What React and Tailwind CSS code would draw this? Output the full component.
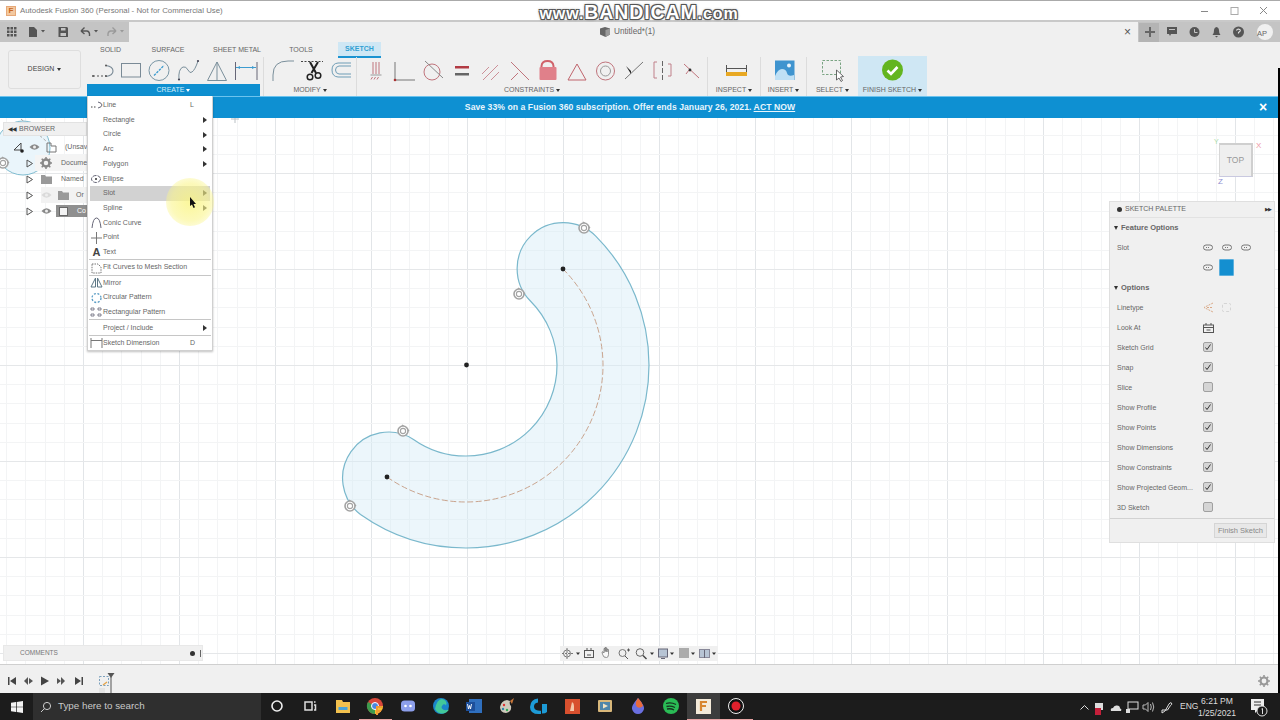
import React from "react";

// svg whose viewBox is in page coordinates, so shapes can be read straight off the screen
const Draw = ({ x, y, w, h, className = "", children }) => (
  <svg width={w} height={h} viewBox={`${x} ${y} ${w} ${h}`} fill="none" className={`block shrink-0 ${className}`}>
    {children}
  </svg>
);

const Caret = ({ x, y, c = "#555" }) => <path d={`M${x - 2} ${y - 1}h4l-2 2.5z`} fill={c} />;

const Ring = ({ x, y }) => (
  <g stroke="#a3a3a3" fill="#fff">
    <path d={`M${x - 1} ${y - 6}l7 6`} strokeWidth="1.6" />
    <circle cx={x} cy={y} r="5" strokeWidth="1.6" />
    <circle cx={x} cy={y} r="2.6" strokeWidth="1.100" />
  </g>
);

const Tab = ({ w, active, children }) => (
  <div
    className={`h-[16px] flex items-center justify-center text-[7px] shrink-0 ${
      active ? "bg-[#cfe7f4] border-b-2 border-[#1b93d1] text-[#2f9fd3] font-bold" : "text-[#666]"
    } ${w}`}
  >
    {children}
  </div>
);

const GroupLabel = ({ children }) => (
  <div className="h-[12px] flex items-center justify-center gap-[2px] text-[7px] text-[#666]">
    {children}
    <span className="w-0 h-0 border-x-[2px] border-x-transparent border-t-[3px] border-t-[#333]" />
  </div>
);

const TitleBar = () => (
  <div className="h-[22px] bg-white border-t border-[#aaa] border-b-2 border-b-[#c9c9c9] flex items-center shrink-0">
    <div className="w-[10px] h-[10px] ml-[6px] bg-[#f3c9a0] border border-[#e6a878] flex items-center justify-center text-[8px] leading-none text-[#c9651f] font-bold">
      F
    </div>
    <span className="ml-[4px] text-[7.850px] text-[#777]">Autodesk Fusion 360 (Personal - Not for Commercial Use)</span>
    <div className="ml-auto flex items-center">
      <Draw x={1190} y={2} w={88} h={16}>
        <path d="M1199 10.500h7" stroke="#888" />
        <rect x="1229" y="6.500" width="7" height="7" stroke="#aaa" />
        <path d="M1258 6l7 7m0-7l-7 7" stroke="#888" />
      </Draw>
    </div>
  </div>
);

const QuickBar = () => (
  <div className="h-[20px] bg-[#f0f0f0] flex items-center shrink-0">
    <div className="w-[129px] h-full bg-[#c4c4c4] shrink-0">
      <Draw x={0} y={22} w={129} h={20}>
        <g fill="#555">
          <rect x="7" y="27" width="2.500" height="2.500" /><rect x="10.500" y="27" width="2.500" height="2.500" /><rect x="14" y="27" width="2.500" height="2.500" />
          <rect x="7" y="30.500" width="2.500" height="2.500" /><rect x="10.500" y="30.500" width="2.500" height="2.500" /><rect x="14" y="30.500" width="2.500" height="2.500" />
          <rect x="7" y="34" width="2.500" height="2.500" /><rect x="10.500" y="34" width="2.500" height="2.500" /><rect x="14" y="34" width="2.500" height="2.500" />
          <path d="M29 27h5l3 3v7h-8z" />
          <path d="M58.500 27h8.500l1 1v9h-9.500z" />
        </g>
        <rect x="61" y="28" width="4.500" height="2.500" fill="#c4c4c4" />
        <rect x="60.500" y="33" width="5.500" height="3" fill="#c4c4c4" />
        <Caret x={43} y={31} />
        <path d="M81 31l3.500-3.500M81 31l3.500 3M81.500 31h5.500q3 .5 2.500 5" stroke="#555" strokeWidth="1.400" />
        <Caret x={96} y={31} />
        <path d="M116 31l-3.500-3.500M116 31l-3.500 3M115.500 31h-5q-3 .5-2.500 5" stroke="#9a9a9a" strokeWidth="1.400" />
        <Caret x={122} y={31} c="#999" />
      </Draw>
    </div>
    <div className="ml-[470px] flex items-center gap-[3px]">
      <Draw x={600} y={27} w={12} h={12}>
        <path d="M601 29.500l5-1.500 5 1.500v6l-4.500 2.500-5.500-2.500z" fill="#666" />
        <path d="M606.500 31l4.500-1.500v6l-4.500 2.500z" fill="#999" />
      </Draw>
      <span className="text-[8.200px] text-[#666]">Untitled*(1)</span>
    </div>
    <span className="ml-[469px] text-[12px] leading-none text-[#555]">×</span>
    <div className="ml-auto w-[142px] h-full bg-[#c4c4c4] shrink-0">
      <Draw x={1136} y={22} w={142} h={20}>
        <rect x="1137" y="23" width="20" height="19" fill="#b4b4b4" />
        <path d="M1148 27v10m-5-5h10" stroke="#666" strokeWidth="2" />
        <path d="M1165 27h10v7h-6l-1 2-1-2h-2z" fill="#555" />
        <path d="M1167 29.500h6" stroke="#c4c4c4" />
        <circle cx="1192.500" cy="32" r="5" fill="#555" />
        <path d="M1192.500 29v3.500h3" stroke="#c4c4c4" />
        <path d="M1210.500 35q1.500-1 1.500-4.500 0-3 2.500-3.500 2.500.5 2.500 3.500 0 3.500 1.500 4.500zM1213 36h3l-1.500 1.500z" fill="#555" />
        <circle cx="1236.500" cy="32" r="5.500" fill="#555" />
        <path d="M1234.500 30.500q.5-1.500 2-1.500 2 .3 1.800 1.700-.5 1-1.800 1.800v1" stroke="#e5e5e5" strokeWidth="1.100" />
        <circle cx="1263" cy="32" r="8" fill="#f0f0f0" />
      </Draw>
    </div>
  </div>
);

const CreateIcons = () => (
  <Draw x={87} y={57} w={173} h={27}>
    <path d="M93 76h13" stroke="#555" strokeDasharray="2 2" />
    <path d="M106 65.500q7 1 7 5.500t-7 5.500" stroke="#7a8a96" strokeWidth="1.100" />
    <circle cx="93" cy="76" r="1" fill="#555" /><circle cx="106" cy="76" r="1" fill="#555" /><circle cx="106" cy="65.500" r="1" fill="#555" />
    <rect x="121.500" y="63.500" width="19" height="13.500" stroke="#7a8a96" />
    <circle cx="159" cy="70.500" r="10" stroke="#7a96a5" />
    <path d="M154 75.500l10-10" stroke="#3d9cd0" strokeWidth="1.300" strokeDasharray="2.500 1" />
    <path d="M179 80q-1-11 4-13 3-1 5 3t4 2q3-2 6-11" stroke="#7a8f9b" />
    <circle cx="179" cy="79.500" r="1.100" fill="#445" /><circle cx="198" cy="61" r="1.100" fill="#445" />
    <path d="M217 62l-9.500 18.500h19zM217 62v18.500" stroke="#7a8f9b" />
    <path d="M235.500 62v18M257 62v18" stroke="#667" />
    <path d="M236 67.500h20" stroke="#3d9cd0" />
    <path d="M237 67.500l3-1.500v3zM255 67.500l-3-1.500v3z" fill="#3d9cd0" />
  </Draw>
);

const ModifyIcons = () => (
  <Draw x={263} y={57} w={93} h={27}>
    <path d="M272 81v-6q0-14 15-14h6" stroke="#7a8f9b" />
    <path d="M300 61.500h22" stroke="#444" strokeDasharray="2 1.500" />
    <path d="M309 62l6 11M317 62l-6.500 11" stroke="#222" strokeWidth="2" />
    <circle cx="309" cy="77" r="2.800" stroke="#222" strokeWidth="1.500" />
    <circle cx="317" cy="75.500" r="2.800" stroke="#222" strokeWidth="1.500" />
    <path d="M350 63h-13q-6 .5-6 7t6 7h13" stroke="#6f9db6" />
    <path d="M350 66h-12q-3.500.5-3.500 4t3.500 4h12" stroke="#6f9db6" />
  </Draw>
);

const ConstraintIcons = () => (
  <Draw x={356} y={57} w={351} h={27}>
    <g stroke="#c0747c">
      <path d="M372 62v12M375 62v12M378 62v12" />
      <path d="M369.500 75h11" stroke="#999" />
      <path d="M370 79.500l1.500-2.500M373 79.500l1.500-2.500M376 79.500l1.500-2.500" />
    </g>
    <path d="M394 62v18h20" stroke="#777" />
    <circle cx="394" cy="80" r="1.300" fill="#a33" />
    <circle cx="431" cy="72" r="8" stroke="#c0747c" />
    <path d="M424 61l18 17" stroke="#888" />
    <rect x="454" y="66" width="14" height="2.500" fill="#b23b44" />
    <rect x="454" y="73" width="14" height="2.500" fill="#666" />
    <path d="M482 80l15-15M490 80l8-8M481 74l7-7" stroke="#cc9098" />
    <path d="M510 62l18 18M510 80l7-7" stroke="#c0747c" />
    <path d="M540.500 67v-1q.5-5 6-5t6 5v1" stroke="#d0626a" strokeWidth="2" />
    <rect x="538.500" y="67" width="17" height="13" rx="1" fill="#e0808a" />
    <path d="M576 64l-9 16h18z" stroke="#c0646c" />
    <circle cx="604.500" cy="71" r="9" stroke="#c0747c" />
    <circle cx="604.500" cy="71" r="5" stroke="#999" />
    <path d="M624 79l18-17" stroke="#777" />
    <path d="M625 66l5 5 0 3z" fill="#222" />
    <path d="M656 62h-3v16h3M667 64h3v12h-3" stroke="#c0808a" />
    <path d="M661.500 61v19" stroke="#666" strokeDasharray="5 2" />
    <path d="M683 64l15 14M688 70l-3 4" stroke="#c0747c" />
    <circle cx="689" cy="70" r="1.400" fill="#333" />
  </Draw>
);

const Group = ({ w, sep, label, children }) => (
  <div className={`flex flex-col shrink-0 ${w} ${sep ? "border-l border-[#dcdcdc]" : ""}`}>
    <div className="h-[27px]">{children}</div>
    {label && <GroupLabel>{label}</GroupLabel>}
  </div>
);

const Toolbar = () => (
  <div className="h-[54px] bg-[#f0f0f0] flex shrink-0">
    <div className="ml-[8px] mt-[8px] w-[73px] h-[39px] rounded-[3px] border border-[#dedede] flex items-center justify-center gap-[3px] text-[7px] text-[#444] shrink-0">
      DESIGN
      <span className="w-0 h-0 border-x-[2px] border-x-transparent border-t-[3px] border-t-[#333]" />
    </div>
    <div className="ml-[6px] flex flex-col">
      <div className="flex">
        <Tab w="w-[47px]">SOLID</Tab>
        <Tab w="w-[68px]">SURFACE</Tab>
        <Tab w="w-[70px]">SHEET METAL</Tab>
        <Tab w="w-[58px] mr-[8px]">TOOLS</Tab>
        <Tab w="w-[43px]" active>SKETCH</Tab>
      </div>
      <div className="flex -mt-px">
        <div className="w-[173px] shrink-0 flex flex-col">
          <CreateIcons />
          <div className="h-[12px] bg-[#0e8fd0] text-[#d5eefa] text-[7px] flex items-center justify-center gap-[2px]">
            CREATE
            <span className="w-0 h-0 border-x-[2px] border-x-transparent border-t-[3px] border-t-white" />
          </div>
        </div>
        <div className="w-[3px] shrink-0" />
        <Group w="w-[93px]" sep label="MODIFY"><ModifyIcons /></Group>
        <Group w="w-[351px]" sep label="CONSTRAINTS"><ConstraintIcons /></Group>
        <Group w="w-[53px]" sep label="INSPECT">
          <Draw x={707} y={57} w={53} h={27}>
            <path d="M725.500 65v10M745.500 65v10M726 68.500h19" stroke="#555" />
            <rect x="725" y="72" width="21" height="4" fill="#e8a823" />
          </Draw>
        </Group>
        <Group w="w-[46px]" sep label="INSERT">
          <Draw x={760} y={57} w={46} h={27}>
            <rect x="774" y="60.500" width="19.500" height="19.500" fill="#3f94cf" />
            <circle cx="788" cy="65.500" r="2" fill="#eaf4fb" />
            <path d="M774 76q3-7 7-7t5 4 7 2v5h-19z" fill="#bfe0f5" />
          </Draw>
        </Group>
        <Group w="w-[52px]" sep label="SELECT">
          <Draw x={806} y={57} w={52} h={27}>
            <rect x="821.500" y="60.500" width="18" height="14" stroke="#7aa483" strokeDasharray="2.500 1.500" />
            <path d="M835.500 70v10l2.500-2 2 3.500 1.500-1-2-3.500 3-.5z" fill="#fff" stroke="#444" strokeWidth=".8" />
          </Draw>
        </Group>
        <div className="w-[69px] -mt-px bg-[#cfe7f4] flex flex-col shrink-0">
          <Draw x={858} y={56} w={69} h={28}>
            <circle cx="892.500" cy="70" r="10.500" fill="#63b51f" />
            <path d="M887.500 70.500l3.500 3.500 6.500-7" stroke="#fff" strokeWidth="2.600" />
          </Draw>
          <GroupLabel>FINISH SKETCH</GroupLabel>
        </div>
      </div>
    </div>
  </div>
);

const Banner = () => (
  <div className="h-[22px] bg-[#0e90d2] border-t border-[#6cc3ee] flex items-center justify-center pr-[20px] relative shrink-0 text-[8.650px] font-bold text-[#e8f5fc] tracking-[0.05px]">
    <span>
      Save 33% on a Fusion 360 subscription. Offer ends January 26, 2021. <span className="underline">ACT NOW</span>
    </span>
    <span className="absolute left-[1259px] top-[2px] text-[14px] leading-[16px] font-bold text-white">×</span>
  </div>
);

const Canvas = () => {
  const xs = [];
  for (let i = -24; i < 44; i++) xs.push(467 + i * 19.2);
  const ys = [];
  for (let i = -13; i < 17; i++) ys.push(365 + i * 19.2);
  return (
    <div className="flex-1 bg-white overflow-hidden min-h-0">
      <Draw x={0} y={118} w={1280} h={546}>
        {xs.map((v, i) => (
          <path key={`x${i}`} d={`M${Math.round(v) + 0.5} 118V664`} stroke={(i - 24) % 5 === 0 ? "#e2e5e8" : "#f3f4f5"} />
        ))}
        {ys.map((v, i) => (
          <path key={`y${i}`} d={`M0 ${Math.round(v) + 0.5}H1280`} stroke={(i - 13) % 5 === 0 ? "#e5e7e9" : "#f3f4f5"} />
        ))}
        <path d="M235 115v8M231 119h8" stroke="#b9c0c4" />
        {/* the earlier circle behind the browser panel */}
        <circle cx="23" cy="148" r="27" fill="#eaf5fb" stroke="#7fbcd0" />
        <path d="M21 119l25 22" stroke="#aaa" strokeDasharray="3 2" />
        <Ring x={3} y={163} />
        {/* slot: arcs split at the axes so they stay on the 466,365 centre */}
        <path
          d="M596 236.300A183 183 0 0 1 649 365A183 183 0 0 1 466 548A183 183 0 0 1 360.500 514.500A46 46 0 0 1 413.500 439.400A91 91 0 0 0 466 456A91 91 0 0 0 557 365A91 91 0 0 0 530.400 301A46 46 0 0 1 596 236.300Z"
          fill="#d5ebf7"
          fillOpacity="0.45"
          stroke="#7ab8cc"
          strokeWidth="1.200"
        />
        <path d="M563 269A137 137 0 0 1 603 365A137 137 0 0 1 466 502A137 137 0 0 1 387 477" stroke="#c9a48e" strokeDasharray="6 2.500" />
        <circle cx="563" cy="269" r="2.400" fill="#222" />
        <circle cx="387" cy="477" r="2.400" fill="#222" />
        <circle cx="466.500" cy="365" r="2.400" fill="#222" />
        <Ring x={584} y={228} />
        <Ring x={519} y={294} />
        <Ring x={403} y={431} />
        <Ring x={350} y={506} />
      </Draw>
    </div>
  );
};

const MenuIcon = ({ children }) => (
  <svg width="13" height="14" viewBox="0 0 13 14" fill="none" className="shrink-0">
    {children}
  </svg>
);

const menuTop = [
  { label: "Line", key: "L", icon: <><path d="M1 9h6" stroke="#444" strokeDasharray="1.500 1.500" /><path d="M8 4q4 1 4 3t-4 3" stroke="#667" /></> },
  { label: "Rectangle", arrow: true },
  { label: "Circle", arrow: true },
  { label: "Arc", arrow: true },
  { label: "Polygon", arrow: true },
  { label: "Ellipse", icon: <><ellipse cx="6" cy="7" rx="4.500" ry="3.500" stroke="#667" strokeDasharray="4 1" /><circle cx="6" cy="7" r="1" fill="#333" /></> },
  { label: "Slot", arrow: true, active: true },
  { label: "Spline", arrow: true },
  { label: "Conic Curve", icon: <path d="M2 12q1-10 4.500-10T11 12" stroke="#667" /> },
  { label: "Point", icon: <path d="M6.500 1v12M1 7h11" stroke="#777" /> },
  { label: "Text", big: true },
];

const Row = ({ label, sub, arrow, active, icon, big }) => (
  <div className={`h-[14.700px] flex items-center relative text-[7px] text-[#666] ${active ? "bg-[#d2d2d2]" : ""}`}>
    <div className="w-[13px] flex justify-center shrink-0">
      {big ? <span className="text-[11px] font-bold leading-none text-[#444]">A</span> : icon && <MenuIcon>{icon}</MenuIcon>}
    </div>
    <span>{label}</span>
    {sub && <span className="absolute left-[100px]">{sub}</span>}
    {arrow && <span className="absolute left-[113px] w-0 h-0 border-y-[3px] border-y-transparent border-l-[4px] border-l-[#333]" />}
  </div>
);

const Sep = () => <div className="h-px -mx-px -mt-[0.3px] bg-[#c6c6c6]" />;

const CreateMenu = () => (
  <div className="absolute left-[87px] top-[96px] w-[126px] h-[255px] bg-white border border-[#d0d0d0] border-t-0 shadow-[0_1px_2px_rgba(0,0,0,0.25)] pt-[2px] px-[2px]">
    {menuTop.map((m) => (
      <Row key={m.label} label={m.label} sub={m.key} arrow={m.arrow} active={m.active} icon={m.icon} big={m.big} />
    ))}
    <Sep />
    <Row label="Fit Curves to Mesh Section" icon={<path d="M2 3h6l3 3v6H2z" stroke="#777" strokeDasharray="1.500 1" />} />
    <Sep />
    <Row label="Mirror" icon={<path d="M5.500 2L1 11h4.500zM7.500 2L12 11H7.500z" stroke="#5d7785" />} />
    <Row label="Circular Pattern" icon={<circle cx="6.500" cy="7" r="4.500" stroke="#5a9cc4" strokeDasharray="2 1.600" strokeWidth="1.300" />} />
    <Row label="Rectangular Pattern" icon={<path d="M1 3h3v2H1zM8 3h3v2H8zM1 9h3v2H1zM8 9h3v2H8z" stroke="#667" strokeWidth=".8" />} />
    <Sep />
    <Row label="Project / Include" arrow />
    <Sep />
    <Row label="Sketch Dimension" sub="D" icon={<path d="M1 2v10M12 2v10M1 4.500h11" stroke="#777" />} />
  </div>
);

const TreeArrow = () => (
  <svg width="8" height="9" viewBox="0 0 8 9" fill="none" className="shrink-0">
    <path d="M1 1l5.500 3.500L1 8z" stroke="#555" />
  </svg>
);

const Eye = ({ c = "#8a8a8a" }) => (
  <svg width="11" height="8" viewBox="0 0 11 8" fill="none" className="shrink-0 block">
    <path d="M.5 4q5-5.500 10 0-5 5.500-10 0z" fill={c} />
    <circle cx="5.500" cy="4" r="1.500" fill="#eee" />
  </svg>
);

const Folder = () => (
  <svg width="11" height="9" viewBox="0 0 11 9" className="shrink-0 block">
    <path d="M0 0h4l1 1.500h6V9H0z" fill="#999" />
  </svg>
);

const Browser = () => (
  <div className="absolute left-[3px] top-[122px] w-[84px] flex flex-col text-[7px] text-[#666]">
    <div className="h-[14px] bg-[#f0f0f0] border border-[#e2e2e2] flex items-center pl-[4px] gap-[3px]">
      <span className="text-[6px] leading-none text-[#333] tracking-[-1px]">◀◀</span>
      <span>BROWSER</span>
    </div>
    <div className="h-[16px] mt-[3px] flex items-center pl-[10px]">
      <svg width="11" height="12" viewBox="0 0 11 12" fill="none" className="shrink-0">
        <path d="M1 9l7-7v7z" stroke="#444" />
        <circle cx="9" cy="10" r="1.800" fill="#222" />
      </svg>
      <span className="ml-[5px]"><Eye /></span>
      <svg width="11" height="11" viewBox="0 0 11 11" fill="none" className="ml-[6px] shrink-0">
        <path d="M1 1h4v3h5v6H1z" stroke="#777" />
      </svg>
      <span className="ml-[8px]">(Unsav</span>
    </div>
    <div className="h-[16px] flex items-center pl-[23px] bg-[linear-gradient(90deg,transparent_32px,#f4f4f4_32px)]">
      <TreeArrow />
      <svg width="12" height="12" viewBox="0 0 12 12" className="ml-[6px] shrink-0">
        <circle cx="6" cy="6" r="3.500" fill="none" stroke="#888" strokeWidth="2.500" />
        <path d="M6 0v2M6 10v2M0 6h2M10 6h2M1.700 1.700l1.400 1.400M8.900 8.900l1.400 1.400M1.700 10.300l1.400-1.400M8.900 3.100l1.400-1.400" stroke="#888" strokeWidth="1.500" />
      </svg>
      <span className="ml-[9px]">Docume</span>
    </div>
    <div className="h-[16px] flex items-center pl-[23px]">
      <TreeArrow />
      <span className="ml-[7px]"><Folder /></span>
      <span className="ml-[9px]">Named</span>
    </div>
    <div className="h-[16px] flex items-center pl-[23px] bg-[linear-gradient(90deg,transparent_38px,#f2f2f2_38px)]">
      <TreeArrow />
      <span className="ml-[7px]"><Eye c="#dadada" /></span>
      <span className="ml-[6px]"><Folder /></span>
      <span className="ml-[7px]">Or</span>
    </div>
    <div className="h-[16px] flex items-center pl-[23px]">
      <TreeArrow />
      <span className="ml-[7px]"><Eye /></span>
      <span className="ml-[4px] h-[12px] flex-1 bg-[#8f8f8f] flex items-center pl-[3px] gap-[9px] text-white">
        <span className="w-[9px] h-[9px] bg-[#f3f3f3] border border-[#666]" />
        Co
      </span>
    </div>
  </div>
);

const Check = ({ on }) => (
  <div className="w-[10px] h-[10px] rounded-[2px] bg-[#d5d5d5] border border-[#a0a0a0] flex items-center justify-center">
    {on && (
      <svg width="8" height="8" viewBox="0 0 8 8" fill="none">
        <path d="M1.500 4.500l1.500 2 3.500-5" stroke="#333" />
      </svg>
    )}
  </div>
);

const Pal = ({ label, children }) => (
  <div className="h-[20px] flex items-center relative pl-[7px] text-[7px] text-[#666]">
    {label}
    <div className="absolute left-[93px] -top-px h-full flex items-center">{children}</div>
  </div>
);

const PalHead = ({ children }) => (
  <div className="h-[20px] flex items-center pl-[4px] gap-[3px] text-[7.500px] font-bold text-[#666]">
    <span className="w-0 h-0 border-x-[2.500px] border-x-transparent border-t-[4px] border-t-[#333]" />
    {children}
  </div>
);

const SlotGlyph = () => (
  <svg width="10" height="7" viewBox="0 0 10 7" fill="none" className="shrink-0">
    <rect x=".5" y="1" width="9" height="5" rx="2.500" stroke="#777" />
    <path d="M3 3.500h4" stroke="#777" strokeDasharray="1 1" />
  </svg>
);

const checks = [
  ["Sketch Grid", true], ["Snap", true], ["Slice", false], ["Show Profile", true], ["Show Points", true],
  ["Show Dimensions", true], ["Show Constraints", true], ["Show Projected Geom...", true], ["3D Sketch", false],
];

const Palette = () => (
  <div className="absolute left-[1109px] top-[201px] w-[166px] h-[342px] bg-[#f0f0f0] border border-[#dfdfdf] flex flex-col">
    <div className="h-[16px] shrink-0 border-b border-[#e2e2e2] flex items-center pl-[7px] text-[7px] text-[#666] relative">
      <span className="w-[5px] h-[5px] rounded-full bg-[#333] mr-[3px]" />
      SKETCH PALETTE
      <span className="absolute left-[155px] text-[5px] leading-none text-[#333] tracking-[-1px]">▶▶</span>
    </div>
    <PalHead>Feature Options</PalHead>
    <Pal label="Slot">
      <div className="flex w-[50px] gap-[9px]"><SlotGlyph /><SlotGlyph /><SlotGlyph /></div>
    </Pal>
    <Pal>
      <div className="flex items-center gap-[6px]">
        <SlotGlyph />
        <div className="w-[15px] h-[17px] bg-[#148fd0] rounded-[1px] border border-[#5cb0dd]" />
      </div>
    </Pal>
    <PalHead>Options</PalHead>
    <Pal label="Linetype">
      <div className="flex items-center gap-[8px]">
        <svg width="11" height="11" viewBox="0 0 11 11" fill="none">
          <path d="M10 1L1 5.500l9 4.500M4 5.500h6" stroke="#d9a987" strokeDasharray="2 1" />
        </svg>
        <div className="w-[9px] h-[9px] rounded-[2px] border border-[#d5d5d5] border-dashed" />
      </div>
    </Pal>
    <Pal label="Look At">
      <svg width="11" height="11" viewBox="0 0 11 11" fill="none">
        <rect x=".5" y="3" width="10" height="7.500" stroke="#555" />
        <path d="M.5 5.500h10M3 1v2M8 1v2M3.500 8h4" stroke="#555" />
      </svg>
    </Pal>
    {checks.map(([label, on]) => (
      <Pal key={label} label={label}><Check on={on} /></Pal>
    ))}
    <div className="border-t border-[#d2d2d2] flex-1 flex items-start justify-end pt-[4px] pr-[7px]">
      <div className="w-[53px] h-[15px] bg-[#e8e8e8] border border-[#d5d5d5] flex items-center justify-center text-[7.500px] text-[#888]">
        Finish Sketch
      </div>
    </div>
  </div>
);

const Comments = () => (
  <div className="absolute left-[3px] top-[645px] w-[200px] h-[16px] bg-[#f0f0f0] border border-[#e8e8e8] flex items-center pl-[16px] text-[6.500px] text-[#777]">
    COMMENTS
    <span className="absolute left-[186px] w-[5px] h-[5px] rounded-full bg-[#333]" />
    <span className="absolute left-[196px] w-px h-[7px] bg-[#666]" />
  </div>
);

const NavBar = () => (
  <div className="absolute left-[560px] top-[646px] w-[158px] h-[15px] bg-[#f0f0f0]">
    <Draw x={560} y={646} w={158} h={15}>
      <circle cx="567" cy="653.500" r="3.500" stroke="#777" />
      <path d="M567 648v11M562 653.500h11" stroke="#777" strokeDasharray="2 1" />
      <Caret x={578} y={653.500} c="#333" />
      <rect x="584.500" y="650.500" width="9" height="7" stroke="#555" />
      <path d="M587 650v-2M591 650v-2M587 655h4" stroke="#555" />
      <path d="M604 657q-2-3-2-5 1-1 2 1v-4.500h1v3-4h1v4-3.500h1v4-2.500h1.500v5q0 3-2 3z" stroke="#777" fill="#f8f8f8" strokeWidth=".8" />
      <circle cx="622.500" cy="653" r="3.500" stroke="#777" />
      <path d="M625 656l3 3M627 650h3m-1.500-1.500v3" stroke="#555" />
      <circle cx="640" cy="652.500" r="3.800" stroke="#666" />
      <path d="M643 655.500l3.500 3.500" stroke="#444" strokeWidth="1.400" />
      <Caret x={652} y={653.500} c="#333" />
      <rect x="658.500" y="649" width="9" height="8" fill="#b7c4d4" stroke="#667" />
      <path d="M661 658.500h4" stroke="#667" />
      <Caret x={672} y={653.500} c="#333" />
      <path d="M679 649h10M679 651h10M679 653h10M679 655h10M679 657h10" stroke="#666" />
      <Caret x={693} y={653.500} c="#333" />
      <rect x="699.500" y="649.500" width="10" height="8" fill="#b7c4d4" stroke="#889" />
      <path d="M704.500 650v8" stroke="#667" />
      <Caret x={714} y={653.500} c="#333" />
    </Draw>
  </div>
);

const Timeline = () => (
  <div className="h-[29px] bg-[#f0f0f0] border-t border-[#cfcfcf] shrink-0">
    <Draw x={0} y={665} w={1278} h={28}>
      <g fill="#444">
        <path d="M8 677h1.500v8H8zM16 677v8l-6-4z" />
        <path d="M24 681l4-4v8zM29 678l4 3-4 3z" fill="#555" />
        <path d="M41 676.500l8 4.500-8 4.500z" />
        <path d="M57 678l4 3-4 3zM61 677l4 4-4 4z" fill="#555" />
        <path d="M75 677v8l6-4zM81.500 677H83v8h-1.500z" />
      </g>
      <rect x="99.500" y="676.500" width="9" height="9" stroke="#7ba0bd" strokeDasharray="2 1.500" />
      <path d="M103 685l4-3" stroke="#e5a44a" strokeWidth="1.400" />
      <rect x="99" y="688" width="6" height="5" fill="#e4e4e4" />
      <path d="M107.500 673h7l-3.500 5z" fill="#555" />
      <path d="M111 677v16" stroke="#555" />
      <circle cx="1264" cy="681" r="3.500" stroke="#999" strokeWidth="2.200" />
      <path d="M1264 675v2M1264 685v2M1258 681h2M1268 681h2M1259.800 676.800l1.400 1.400M1266.800 683.800l1.400 1.400M1259.800 685.200l1.400-1.400M1266.800 678.200l1.400-1.400" stroke="#999" strokeWidth="1.600" />
    </Draw>
  </div>
);

const taskIcons = [
  { id: "cortana", g: <circle cx="10" cy="10" r="5" stroke="#eee" strokeWidth="1.600" /> },
  { id: "view", g: <path d="M5 6h7v8H5zM14 6h1.500M14 9h1.500v5H14" stroke="#ddd" strokeWidth="1.500" /> },
  { id: "files", g: <><path d="M3 4h6l1 2h7v11H3z" fill="#f2c14e" /><rect x="5.500" y="11" width="9" height="3" fill="#4aa3d8" /></> },
  { id: "chrome", bar: true, g: <><circle cx="10" cy="10" r="8" fill="#d8483b" /><path d="M10 10L3 6A8 8 0 0 0 10 18z" fill="#3d9b4e" /><path d="M10 10v8a8 8 0 0 0 8-8z" fill="#f2c230" /><circle cx="10" cy="10" r="3.500" fill="#4a88e0" stroke="#fff" /><path d="M11 10h6v2h-4v2h3v2h-3v3h-2z" fill="#f29b33" /></> },
  { id: "discord", g: <><rect x="3" y="4.500" width="14" height="11" rx="3.500" fill="#8c9eea" /><circle cx="7.500" cy="10" r="1.300" fill="#fff" /><circle cx="12.500" cy="10" r="1.300" fill="#fff" /></> },
  { id: "edge", g: <><circle cx="10" cy="10" r="8" fill="#1b86c9" /><path d="M4 13q3 5 8 4.500 4-.5 6-4-5 2-7-1-1-2 1-4 2-1 3 1 2-5-4-6.500-5 0-7 10z" fill="#42c99a" /></> },
  { id: "word", g: <><rect x="5" y="3" width="13" height="14" fill="#2f6fbe" /><rect x="2" y="6" width="9" height="9" fill="#1d4f9b" /><path d="M3.500 8l1 5 1-3.500 1 3.500 1-5" stroke="#fff" strokeWidth=".9" fill="none" /></> },
  { id: "paint", g: <><path d="M3 11q1-6 7-7l3 1q-1 3 1 5 1 6-5 7-6-.5-6-6z" fill="#cfcabc" /><path d="M13 5l4-3-2 6z" fill="#c7763a" /><circle cx="7" cy="9" r="1.200" fill="#d33" /><circle cx="6" cy="13" r="1.200" fill="#38a" /><circle cx="10" cy="14" r="1.200" fill="#3a5" /></> },
  { id: "logi", g: <path d="M9 2.500v4q-4 .5-4 4t4 4 3-.5v4q-11 1-11-7 .5-8 8-8.500zM13 8h5v8q-1.500 1.500-5 1.500z" fill="#1d9bd7" /> },
  { id: "office", g: <><rect x="3" y="3" width="15" height="15" fill="#d8502e" /><path d="M8 15l2-9q2 1 2 4v5z" fill="#f4c7a8" /></> },
  { id: "video", g: <><rect x="3" y="4" width="14" height="12" rx="1" fill="#d8b77a" /><rect x="5" y="6" width="10" height="8" fill="#4e86aa" /><path d="M8 7.500l5 2.500-5 2.500z" fill="#f2e3c2" /></> },
  { id: "drop", g: <><path d="M10 2q7 8 6 11-1.500 5-6 5t-6-5q-1-3 6-11z" fill="#6a6fe0" /><path d="M10 2q4 4 5 8-3 3-6 1-3-3 1-9z" fill="#e96a3a" /></> },
  { id: "spotify", g: <><circle cx="10" cy="10" r="8" fill="#2abb55" /><path d="M5 7.500q5-1.500 10 1M5.500 10.500q4.500-1 8.500 1M6 13q4-.8 7 1" stroke="#15331f" strokeWidth="1.300" fill="none" /></> },
  { id: "fusion", active: true, bar: true, g: <><rect x="3" y="3" width="15" height="15" fill="#f4ead9" /><path d="M8 15V6h6M8 10h5" stroke="#d8862f" strokeWidth="2.200" fill="none" /></> },
  { id: "bandicam", bar: true, g: <><circle cx="10" cy="10" r="7.500" fill="#111" stroke="#eee" /><circle cx="10" cy="10" r="4.500" fill="#e0202c" /></> },
];

const Taskbar = () => (
  <div className="h-[27px] bg-[#1c1c1c] flex items-stretch shrink-0">
    <div className="w-[33px] flex items-center justify-center shrink-0">
      <svg width="12" height="12" viewBox="0 0 12 12" fill="#f2f2f2">
        <path d="M0 1.700L5 1v4.700H0zM5.700.9L12 0v5.700H5.700zM0 6.300h5V11l-5-.7zM5.700 6.300H12V12l-6.300-.9z" />
      </svg>
    </div>
    <div className="w-[227.600px] bg-[#2f2f2f] flex items-center pl-[7px] shrink-0">
      <svg width="12" height="12" viewBox="0 0 12 12" fill="none">
        <circle cx="7" cy="5" r="3.600" stroke="#ccc" />
        <path d="M4.500 7.500L1 11" stroke="#ccc" />
      </svg>
      <span className="ml-[6px] text-[9.800px] text-[#c9c9c9]">Type here to search</span>
    </div>
    {taskIcons.map((t) => (
      <div
        key={t.id}
        className={`w-[32.800px] flex items-center justify-center shrink-0 border-b ${t.bar ? "border-[#e7a3a3]" : "border-transparent"} ${t.active ? "bg-[#3d3d3d]" : ""}`}
      >
        <svg width="20" height="20" viewBox="0 0 20 20" fill="none">{t.g}</svg>
      </div>
    ))}
    <div className="ml-auto flex items-center text-[#ddd] shrink-0">
      <Draw x={1076} y={695} w={104} h={24}>
        <path d="M1080.500 709.500l4-4 4 4" stroke="#ddd" />
        <rect x="1095" y="703" width="8" height="7" fill="#ddd" />
        <rect x="1095" y="708" width="6" height="7" fill="#c41f3a" />
        <path d="M1111 711q-1-3 2-3 1-3 4-2.500 3 0 3 3 2 0 1 2.500z" fill="#ddd" />
        <rect x="1128" y="702" width="10" height="7" stroke="#ddd" />
        <path d="M1126 709h4v4h-4z" fill="#ddd" />
        <path d="M1143 705h2.500l2.500-2.500v9l-2.500-2.500H1143zM1150.500 704q1.500 3 0 6M1152.500 702.500q2.500 4.500 0 9" stroke="#bbb" />
        <path d="M1162 713l3-2 4-7q1-2 2.500-1 1 1.500-1 2.500l-3 4.500h-5.500z" stroke="#ddd" />
      </Draw>
      <span className="w-[17px] text-[8.500px] text-center">ENG</span>
      <div className="w-[40px] flex flex-col items-center text-[8.600px] leading-[12px]">
        <span>6:21 PM</span>
        <span>1/25/2021</span>
      </div>
      <svg width="20" height="22" viewBox="0 0 20 22" fill="none" className="ml-[12px] mr-[11px]">
        <path d="M2 3h13v11H9l-3 3v-3H2z" fill="#eee" />
        <path d="M5 6h7M5 9h7" stroke="#333" />
        <circle cx="13" cy="15" r="5" fill="#1c1c1c" stroke="#ddd" />
        <path d="M12.500 13l1-.5V18" stroke="#ddd" />
      </svg>
    </div>
  </div>
);

const ViewCube = () => (
  <div className="absolute left-[1213px] top-[137px] w-[50px] h-[52px]">
    <div className="absolute left-[6px] top-[6px] w-[34px] h-[34px] bg-[#efefef] border-t-2 border-r-2 border-[#cfcfcf] border-l border-b border-l-[#d7d7d7] border-b-[#c9c9e0] flex items-center justify-center text-[8.500px] text-[#999]">
      TOP
    </div>
    <span className="absolute left-[43px] top-[3px] text-[8px] text-[#ee9aa5]">X</span>
    <span className="absolute left-[5px] top-[39px] text-[8px] text-[#8f8fd0]">Z</span>
    <span className="absolute left-[1px] top-[0px] text-[7px] text-[#a8dba8]">Y</span>
  </div>
);

export default function App() {
  return (
    <div className="relative w-[1280px] h-[720px] overflow-hidden flex flex-col bg-white [font-family:'Liberation_Sans',Arial,sans-serif]">
      <TitleBar />
      <QuickBar />
      <Toolbar />
      <Banner />
      <Canvas />
      <Timeline />
      <Taskbar />

      <Browser />
      <CreateMenu />
      <Palette />
      <ViewCube />
      <Comments />
      <NavBar />

      {/* avatar initials */}
      <span className="absolute left-[1257px] top-[28px] text-[7.500px] text-[#666]">AP</span>

      {/* cursor highlight */}
      <div className="absolute left-[166px] top-[178px] w-[48px] h-[48px] rounded-full bg-[radial-gradient(circle,rgba(250,245,130,0.8)_0%,rgba(250,245,140,0.6)_55%,rgba(250,245,150,0)_100%)]" />
      <svg width="8" height="12" viewBox="0 0 8 12" className="absolute left-[189px] top-[197px]">
        <path d="M1 0v9l2-1.500L4.500 11l1.500-.7L4.500 7H7z" fill="#111" />
      </svg>

      {/* recorder watermark */}
      <div className="absolute left-[530px] top-[1px] w-[218px] text-center text-white font-bold whitespace-nowrap text-[19.500px] leading-[23px] tracking-[0.9px] [text-shadow:-1px_-1px_0_#555,1px_-1px_0_#555,-1px_1px_0_#555,1px_1px_0_#555,0_0_3px_#333]">
        <span className="text-[16px]">www.</span>
        <span>BANDICAM</span>
        <span className="text-[16px]">.com</span>
      </div>

      {/* edge of the desktop to the right of the window */}
      <div className="absolute left-[1278px] top-[68px] w-[2px] h-[625px] bg-black" />
    </div>
  );
}
